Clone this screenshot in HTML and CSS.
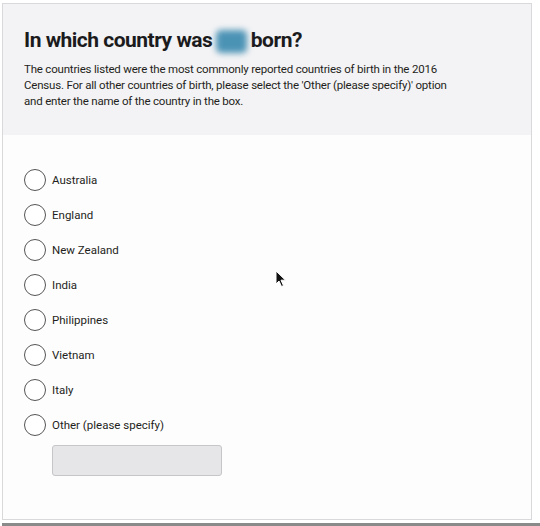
FILE: index.html
```html
<!DOCTYPE html>
<html lang="en">
<head>
    <meta charset="UTF-8">
    <meta name="viewport" content="width=device-width, initial-scale=1.0">
    <title>Country of birth</title>
    <link rel="stylesheet" href="styles.css">
</head>
<body>

    <div class="page">
        <div class="card">
            <div class="question-head">
                <h1>In which country was <span class="person-name" aria-hidden="true"></span> born?</h1>
                <p>The countries listed were the most commonly reported countries of birth in the 2016 Census. For all other countries of birth, please select the 'Other (please specify)' option and enter the name of the country in the box.</p>
            </div>

            <div class="options">
                <label class="option"><input type="radio" name="country"><span>Australia</span></label>
                <label class="option"><input type="radio" name="country"><span>England</span></label>
                <label class="option"><input type="radio" name="country"><span>New Zealand</span></label>
                <label class="option"><input type="radio" name="country"><span>India</span></label>
                <label class="option"><input type="radio" name="country"><span>Philippines</span></label>
                <label class="option"><input type="radio" name="country"><span>Vietnam</span></label>
                <label class="option"><input type="radio" name="country"><span>Italy</span></label>
                <label class="option"><input type="radio" name="country"><span>Other (please specify)</span></label>
                <input type="text" class="other-input" disabled>
            </div>

            <svg class="pointer" width="12" height="18" viewBox="0 0 12 18">
                <path d="M1 1 L1 14 L4 11 L6.5 16.5 L8.5 15.6 L6 10.2 L10.5 10.2 Z" fill="#111" stroke="#fff" stroke-width="1"/>
            </svg>
        </div>
        <div class="window-edge"></div>
    </div>

</body>
</html>
```

FILE: styles.css
```css
body {
    margin: 0;
    background-color: #ffffff;
    font-family: Roboto, "Noto Sans", Arial, sans-serif;
    color: #1d1d1f;
}
.page {
    width: 540px;
    height: 526px;
    padding: 3px 0 0 2px;
    box-sizing: border-box;
    display: flex;
    flex-direction: column;
}
.card {
    position: relative;
    width: 530px;
    height: 517px;
    box-sizing: border-box;
    border: 1px solid #d9d9db;
    background: #fdfdfe;
}
.question-head {
    background-color: #f3f3f5;
    padding: 21px 21px 26px;
}
h1 {
    margin: 0;
    font-size: 21px;
    line-height: 30px;
    font-weight: 700;
    letter-spacing: -0.5px;
    color: #1b1b1d;
}
.person-name {
    display: inline-block;
    width: 31px;
    height: 23px;
    margin: 0 -1px;
    vertical-align: -6px;
    background-color: #4b93b5;
    border-radius: 5px;
    filter: blur(3px);
}
.question-head p {
    margin: 6px 0 0;
    max-width: 430px;
    font-size: 11.5px;
    line-height: 16px;
    letter-spacing: -0.2px;
    color: #1f1f21;
}
.options {
    padding: 27px 0 0 21px;
    display: flex;
    flex-direction: column;
}
.option {
    display: flex;
    align-items: center;
    height: 35px;
    font-size: 11.5px;
    color: #1f1f21;
}
.option input {
    appearance: none;
    margin: 0 6px 0 0;
    width: 22px;
    height: 22px;
    border: 1.5px solid #555;
    border-radius: 50%;
    background: #fff;
}
.other-input {
    margin: 3px 0 0 28px;
    width: 170px;
    height: 31px;
    box-sizing: border-box;
    border: 1px solid #c6c6c8;
    border-radius: 3px;
    background-color: #e6e6e8;
}
.pointer {
    position: absolute;
    left: 272px;
    top: 266px;
}
.window-edge {
    margin-top: 3px;
    height: 3px;
    background-color: #8a8a8a;
}
```
